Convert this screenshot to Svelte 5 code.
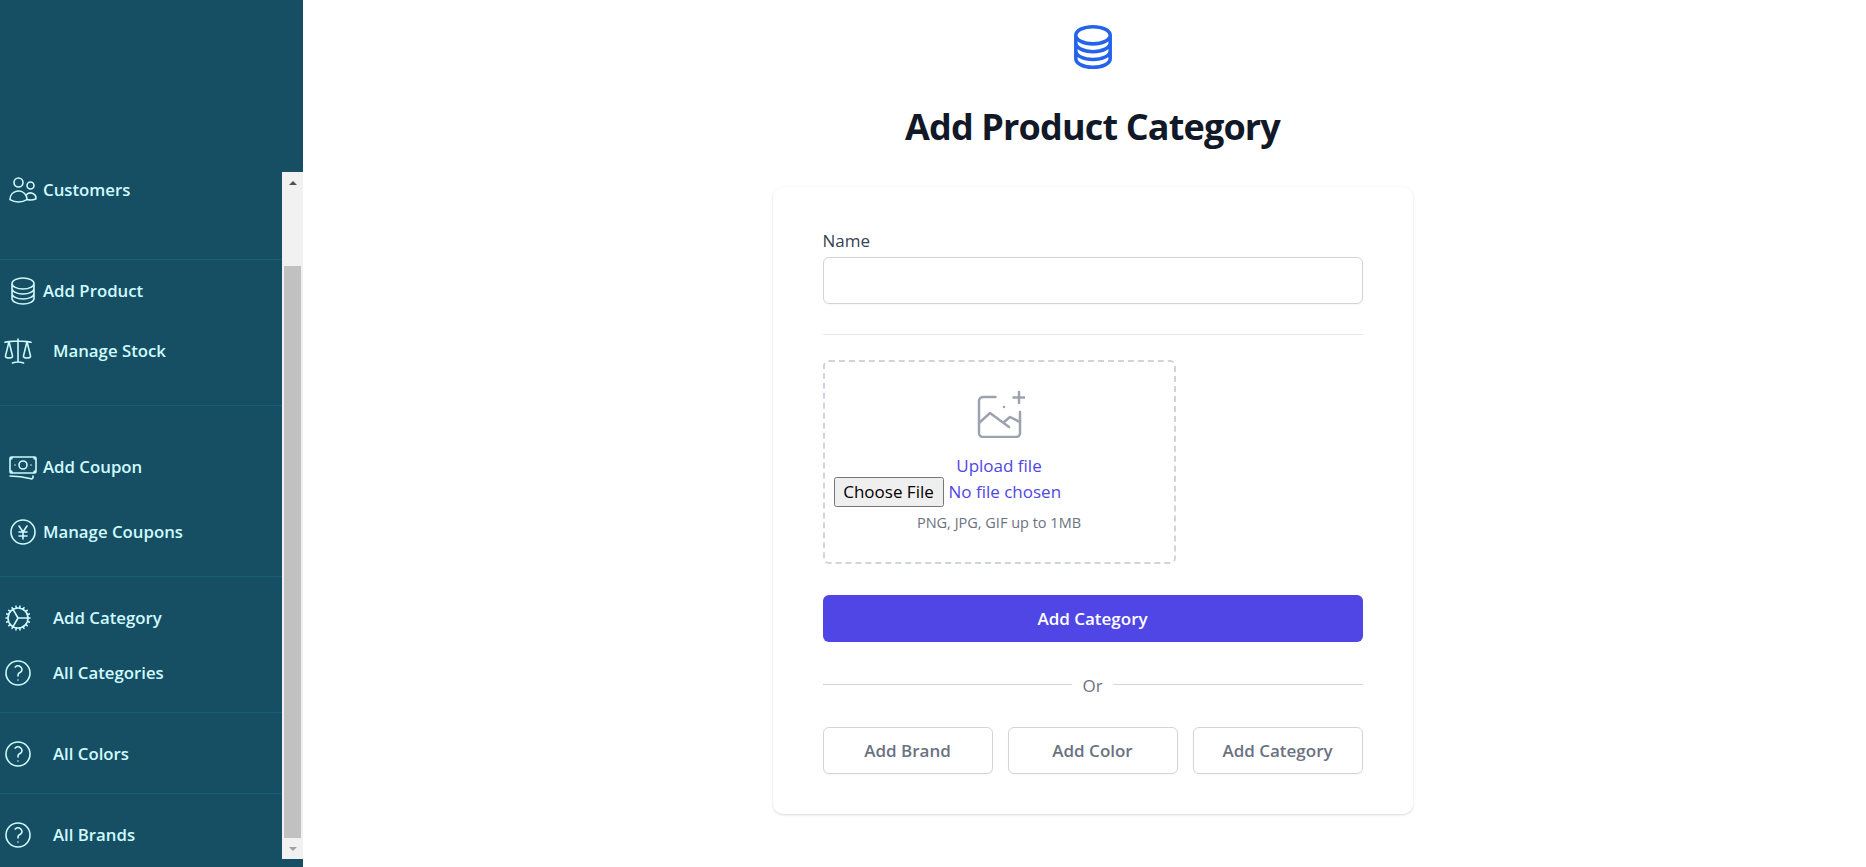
<script>
  const paths = {
    users: "M15 19.128a9.38 9.38 0 002.625.372 9.337 9.337 0 004.121-.952 4.125 4.125 0 00-7.533-2.493M15 19.128v-.003c0-1.113-.285-2.16-.786-3.07M15 19.128v.106A12.318 12.318 0 018.624 21c-2.331 0-4.512-.645-6.374-1.766l-.001-.109a6.375 6.375 0 0111.964-3.07M12 6.375a3.375 3.375 0 11-6.75 0 3.375 3.375 0 016.75 0zm8.25 2.25a2.625 2.625 0 11-5.25 0 2.625 2.625 0 015.25 0z",
    stack: "M20.25 6.375c0 2.278-3.694 4.125-8.25 4.125S3.75 8.653 3.75 6.375m16.5 0c0-2.278-3.694-4.125-8.25-4.125S3.75 4.097 3.75 6.375m16.5 0v11.25c0 2.278-3.694 4.125-8.25 4.125s-8.25-1.847-8.25-4.125V6.375m16.5 0v3.75m-16.5-3.75v3.75m16.5 0v3.75C20.25 16.153 16.556 18 12 18s-8.25-1.847-8.25-4.125v-3.75m16.5 0c0 2.278-3.694 4.125-8.25 4.125s-8.25-1.847-8.25-4.125",
    scale: "M12 3v17.25m0 0c-1.472 0-2.882.265-4.185.75M12 20.25c1.472 0 2.882.265 4.185.75M18.75 4.97A48.416 48.416 0 0012 4.5c-2.291 0-4.545.16-6.75.47m13.5 0c1.01.143 2.01.317 3 .52m-3-.52l2.62 10.726c.122.499-.106 1.028-.589 1.202a5.988 5.988 0 01-2.031.352 5.988 5.988 0 01-2.031-.352c-.483-.174-.711-.703-.59-1.202L18.75 4.971zm-16.5.52c.99-.203 1.99-.377 3-.52m0 0l2.62 10.726c.122.499-.106 1.028-.589 1.202a5.989 5.989 0 01-2.031.352 5.989 5.989 0 01-2.031-.352c-.483-.174-.711-.703-.59-1.202L5.25 4.971z",
    notes: "M2.25 18.75a60.07 60.07 0 0115.797 2.101c.727.198 1.453-.342 1.453-1.096V18.75M3.75 4.5v.75A.75.75 0 013 6h-.75m0 0v-.375c0-.621.504-1.125 1.125-1.125H20.25M2.25 6v9m18-10.5v.75c0 .414.336.75.75.75h.75m-1.5-1.5h.375c.621 0 1.125.504 1.125 1.125v9.75c0 .621-.504 1.125-1.125 1.125h-.375m1.5-1.5H21a.75.75 0 00-.75.75v.75m0 0H3.75m0 0h-.375a1.125 1.125 0 01-1.125-1.125V15m1.5 1.5v-.75A.75.75 0 003 15h-.75M15 10.5a3 3 0 11-6 0 3 3 0 016 0zm3 0h.008v.008H18V10.5zm-12 0h.008v.008H6V10.5z",
    yen: "M9 7.5l3 4.5m0 0l3-4.5M12 12v5.25M15 12H9m6 3H9m12-3a9 9 0 11-18 0 9 9 0 0118 0z",
    cog: "M4.5 12a7.5 7.5 0 0015 0m-15 0a7.5 7.5 0 1115 0m-15 0H3m16.5 0H21m-1.5 0H12m-8.457 3.077l1.41-.513m14.095-5.13l1.41-.513M5.106 17.785l1.15-.964m11.49-9.642l1.149-.964M7.501 19.795l.75-1.3m7.5-12.99l.75-1.3m-6.063 16.658l.26-1.477m2.605-14.772l.26-1.477m0 17.726l-.26-1.477M10.698 4.614l-.26-1.477M16.5 19.794l-.75-1.299M7.5 4.205L12 12m6.894 5.785l-1.149-.964M6.256 7.178l-1.15-.964m15.352 8.864l-1.41-.513M4.954 9.435l-1.41-.514M12.002 12l-3.75 6.495",
    help: "M9.879 7.519c1.171-1.025 3.071-1.025 4.242 0 1.172 1.025 1.172 2.687 0 3.712-.203.179-.43.326-.67.442-.745.361-1.45.999-1.45 1.827v.75M21 12a9 9 0 11-18 0 9 9 0 0118 0zm-9 5.25h.008v.008H12v-.008z"
  };

  const groups = [
    [{ label: "Customers", icon: "users" }],
    [
      { label: "Add Product", icon: "stack" },
      { label: "Manage Stock", icon: "scale", wide: true }
    ],
    [
      { label: "Add Coupon", icon: "notes" },
      { label: "Manage Coupons", icon: "yen" }
    ],
    [
      { label: "Add Category", icon: "cog", wide: true },
      { label: "All Categories", icon: "help", wide: true }
    ],
    [{ label: "All Colors", icon: "help", wide: true }],
    [{ label: "All Brands", icon: "help", wide: true }]
  ];
</script>

<div class="page">
  <aside class="sidebar">
    <div class="menu">
      <nav class="links">
        {#each groups as group, i}
          <ul class="group g{i}">
            {#each group as item}
              <li class="item" class:wide={item.wide}>
                <svg viewBox="0 0 24 24" fill="none" stroke="currentColor" stroke-width="1.2" stroke-linecap="round" stroke-linejoin="round">
                  <path d={paths[item.icon]} />
                </svg>
                <span>{item.label}</span>
              </li>
            {/each}
          </ul>
        {/each}
      </nav>
      <div class="scrollbar">
        <div class="arrow up"></div>
        <div class="track"><div class="thumb"></div></div>
        <div class="arrow down"></div>
      </div>
    </div>
  </aside>

  <main class="content">
    <svg class="logo" viewBox="0 0 24 24" fill="none" stroke="currentColor" stroke-width="1.7" stroke-linecap="round" stroke-linejoin="round">
      <path d={paths.stack} />
    </svg>
    <h1>Add Product Category</h1>

    <form class="card">
      <label for="name">Name</label>
      <input id="name" class="text" type="text" />
      <hr />

      <div class="drop">
        <svg viewBox="0 0 48 48" fill="none" stroke="currentColor" stroke-width="2.5" stroke-linecap="round" stroke-linejoin="round">
          <path d="M18.5 7H6a4 4 0 00-4 4v32a4 4 0 004 4h33a4 4 0 004-4V22" />
          <path d="M2 33l11-10 19 14M27 32l6-5 10 5" />
          <path d="M42 2v11M36.5 7.500h11" />
          <path d="M27 17h.01" />
        </svg>
        <span class="upload">Upload file</span>
        <input class="file" type="file" />
        <p>PNG, JPG, GIF up to 1MB</p>
      </div>

      <button type="button" class="primary">Add Category</button>

      <div class="or"><span>Or</span></div>

      <div class="others">
        <button type="button">Add Brand</button>
        <button type="button">Add Color</button>
        <button type="button">Add Category</button>
      </div>
    </form>
  </main>
</div>

<style>
  :global(body) {
    margin: 0;
    background: #fff;
  }
  .page {
    display: flex;
    height: 867px;
    overflow: hidden;
    font-family: "Open Sans", "Noto Sans", sans-serif;
  }

  .sidebar {
    flex: none;
    width: 303px;
    background: #164e63;
    color: #cffafe;
  }
  .menu {
    display: flex;
    margin-top: 172px;
    height: 687px;
  }
  .links {
    flex: 1;
  }
  .group {
    list-style: none;
    margin: 0;
    padding: 23px 0 21px;
    border-bottom: 1px solid #155e75;
  }
  .group:last-child {
    border-bottom: none;
  }
  .g0 { padding: 0 0 51px; }
  .g1 { padding: 13px 0 36px; }
  .g2 { padding: 43px 0 26px; }
  .g1 .item + .item { margin-top: 24px; }
  .g2 .item + .item { margin-top: 29px; }
  .g3 .item + .item { margin-top: 19px; }

  .item {
    display: flex;
    align-items: center;
    gap: 4px;
    height: 36px;
    padding-left: 7px;
    font-size: 16.8px;
    font-weight: 600;
  }
  .item span {
    margin-bottom: 2px;
  }
  .item.wide {
    gap: 19px;
    padding-left: 2px;
  }
  .item svg {
    flex: none;
    width: 32px;
    height: 32px;
  }

  .scrollbar {
    flex: none;
    display: flex;
    flex-direction: column;
    width: 21px;
    background: #f1f1f1;
  }
  .arrow {
    flex: none;
    height: 21px;
    display: flex;
    align-items: center;
    justify-content: center;
  }
  .arrow::before {
    content: "";
    border-left: 4px solid transparent;
    border-right: 4px solid transparent;
  }
  .arrow.up::before { border-bottom: 4px solid #505050; }
  .arrow.down::before { border-top: 4px solid #a3a3a3; }
  .track {
    flex: 1;
    display: flex;
    flex-direction: column;
    justify-content: flex-end;
  }
  .thumb {
    height: 572px;
    margin: 0 2px;
    background: #c1c1c1;
  }

  .content {
    flex: 1;
    display: flex;
    flex-direction: column;
    align-items: center;
    padding: 22px 0 0 16px;
  }
  .logo {
    width: 50px;
    height: 50px;
    color: #2563eb;
  }
  h1 {
    margin: 24px 0 0;
    font-size: 36px;
    line-height: 62px;
    font-weight: 700;
    letter-spacing: -0.85px;
    color: #111827;
  }
  .card {
    box-sizing: border-box;
    display: flex;
    flex-direction: column;
    width: 640px;
    height: 627px;
    margin-top: 29px;
    padding: 42px 50px 0;
    background: #fff;
    border-radius: 10px;
    box-shadow: 0 1px 3px rgba(0, 0, 0, 0.1), 0 1px 2px rgba(0, 0, 0, 0.06);
  }
  label {
    font-size: 17px;
    line-height: 24px;
    font-weight: 500;
    color: #374151;
  }
  .text {
    box-sizing: border-box;
    height: 47px;
    margin-top: 4px;
    border: 1px solid #d1d5db;
    border-radius: 6px;
    box-shadow: 0 1px 2px rgba(0, 0, 0, 0.03);
  }
  hr {
    width: 100%;
    margin: 30px 0 25px;
    border: 0;
    border-top: 1px solid #e5e7eb;
  }
  .drop {
    box-sizing: border-box;
    display: flex;
    flex-direction: column;
    align-items: center;
    width: 353px;
    height: 204px;
    padding-top: 28px;
    border: 2px dashed #d1d5db;
    border-radius: 6px;
    color: #4f46e5;
  }
  .drop svg {
    width: 48px;
    height: 48px;
    margin-left: 4px;
    color: #9ca3af;
  }
  .upload {
    margin-top: 16px;
    font-size: 17px;
    line-height: 23px;
    font-weight: 500;
  }
  .file {
    width: 331px;
    font: inherit;
    font-size: 17px;
    font-weight: 500;
    color: #4f46e5;
  }
  .file::file-selector-button {
    width: 110px;
    height: 30px;
    margin-right: 5px;
    padding: 0 0 2px;
    font-family: inherit;
    font-size: 17px;
    font-weight: 400;
    color: #000;
  }
  .drop p {
    margin: 6px 0 0;
    font-size: 14.5px;
    line-height: 20px;
    color: #6b7280;
  }
  button {
    font-family: inherit;
    font-size: 17px;
    font-weight: 600;
    cursor: pointer;
  }
  .primary {
    height: 47px;
    margin-top: 31px;
    border: 0;
    border-radius: 6px;
    background: #4f46e5;
    color: #fff;
  }
  .or {
    display: flex;
    align-items: center;
    gap: 10px;
    margin-top: 33px;
    font-size: 17px;
    line-height: 22px;
    color: #6b7280;
  }
  .or::before,
  .or::after {
    content: "";
    flex: 1;
    margin-bottom: 4px;
    border-top: 1px solid #d1d5db;
  }
  .others {
    display: grid;
    grid-template-columns: repeat(3, 1fr);
    gap: 15px;
    margin-top: 30px;
  }
  .others button {
    height: 47px;
    border: 1px solid #d1d5db;
    border-radius: 6px;
    background: #fff;
    color: #6b7280;
    box-shadow: 0 1px 2px rgba(0, 0, 0, 0.03);
  }
</style>
